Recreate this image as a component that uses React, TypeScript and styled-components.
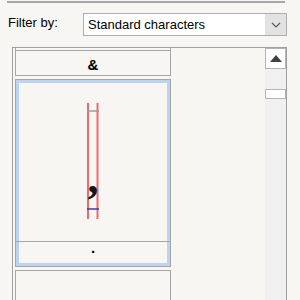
import React from "react";
import styled, { createGlobalStyle } from "styled-components";

const GlobalStyle = createGlobalStyle`
  html, body {
    margin: 0;
    padding: 0;
    background: #f7f6f3;
    overflow: hidden;
  }
  body {
    font-family: "Liberation Sans", Arial, sans-serif;
    font-size: 13px;
    color: #000;
  }
`;

const GREY = "#a6a6a6";
const BLUE = "#bcd3f1";

type Glyph = { char: string; label: string; selected?: boolean; preview?: boolean };

const glyphs: Glyph[] = [
  { char: "&", label: "&" },
  { char: ",", label: ".", selected: true, preview: true },
  { char: "'", label: "" },
];

function App() {
  return (
    <>
      <GlobalStyle />
      <Panel>
        <TopRule />
        <FilterRow>
          <FilterLabel>Filter by:</FilterLabel>
          <Select>
            <SelectText>Standard characters</SelectText>
            <SelectButton>
              <svg width="10" height="6" viewBox="0 0 10 6">
                <polyline points="1,1 5,5 9,1" fill="none" stroke="#5a5a5a" strokeWidth="1.2" />
              </svg>
            </SelectButton>
          </Select>
        </FilterRow>
        <ListBox>
          <CellColumn>
            {glyphs.map((g, i) => (
              <Cell key={i}>
                <ImageArea $selected={!!g.selected}>
                  {g.preview && (
                    <svg width="148" height="158" viewBox="0 0 148 158">
                      <line x1="69" y1="20" x2="69" y2="136" stroke="#f26868" strokeWidth="2" />
                      <line x1="78.5" y1="20" x2="78.5" y2="136" stroke="#f26868" strokeWidth="2" />
                      <line x1="68" y1="28" x2="80" y2="28" stroke="#9c9c9c" strokeWidth="1.5" />
                      <line x1="68" y1="126" x2="80" y2="126" stroke="#3a3aa8" strokeWidth="1.5" />
                      <text
                        x="74"
                        y="110"
                        textAnchor="middle"
                        fontSize="44"
                        fontWeight="bold"
                        fontFamily="Liberation Serif, serif"
                        fill="#151515"
                      >
                        {g.char}
                      </text>
                    </svg>
                  )}
                </ImageArea>
                <Separator />
                <LabelArea $selected={!!g.selected}>{g.label}</LabelArea>
              </Cell>
            ))}
          </CellColumn>
          <ScrollBar>
            <ScrollButton>
              <svg width="12" height="7" viewBox="0 0 12 7">
                <polygon points="0,7 6,0 12,7" fill="#3f3f3f" />
              </svg>
            </ScrollButton>
            <Thumb />
          </ScrollBar>
        </ListBox>
      </Panel>
    </>
  );
}

export default App;

const Panel = styled.div`
  width: 300px;
  height: 300px;
  overflow: hidden;
`;

const TopRule = styled.div`
  margin: 1px 15px 0 7px;
  border-top: 2px solid #a8a8a8;
`;

const FilterRow = styled.div`
  display: flex;
  align-items: flex-start;
  height: 23px;
  margin-top: 10px;
  padding: 0 13px 0 8px;
`;

const FilterLabel = styled.div`
  width: 75px;
  line-height: 15px;
  padding-top: 2px;
`;

const Select = styled.div`
  flex: 1;
  display: flex;
  height: 23px;
  box-sizing: border-box;
  border: 1px solid #adadad;
  background: #ffffff;
`;

const SelectText = styled.div`
  flex: 1;
  line-height: 15px;
  padding: 3px 0 0 4px;
`;

const SelectButton = styled.div`
  width: 21px;
  background: #e2e2e2;
  display: flex;
  align-items: center;
  justify-content: center;
`;

const ListBox = styled.div`
  display: flex;
  height: 270px;
  margin: 11px 13px 0 12px;
  border: 1px solid #a0a0a0;
  overflow: hidden;
`;

const CellColumn = styled.div`
  flex: 1;
  display: flex;
  flex-direction: column;
  gap: 3px;
  padding-left: 2px;
  margin-top: -160px;
`;

const Cell = styled.div`
  width: 156px;
  box-sizing: border-box;
  border: 1px solid ${GREY};
  display: flex;
  flex-direction: column;
`;

const ImageArea = styled.div<{ $selected: boolean }>`
  height: 158px;
  border: 3px solid ${(p) => (p.$selected ? BLUE : "transparent")};
  border-bottom: none;
  svg {
    display: block;
  }
`;

const Separator = styled.div`
  height: 1px;
  background: ${GREY};
`;

const LabelArea = styled.div<{ $selected: boolean }>`
  box-sizing: border-box;
  height: 24px;
  border: 3px solid ${(p) => (p.$selected ? BLUE : "transparent")};
  border-top: none;
  display: flex;
  align-items: center;
  justify-content: center;
  font-size: 15px;
  line-height: 15px;
  font-weight: bold;
  padding-top: ${(p) => (p.$selected ? "0" : "6px")};
  padding-bottom: ${(p) => (p.$selected ? "10px" : "0")};
  overflow: visible;
`;

const ScrollBar = styled.div`
  width: 21px;
  background: #f0f0f0;
  display: flex;
  flex-direction: column;
`;

const ScrollButton = styled.div`
  height: 21px;
  box-sizing: border-box;
  border: 1px solid #b4b4b4;
  background: #ffffff;
  display: flex;
  align-items: center;
  justify-content: center;
`;

const Thumb = styled.div`
  height: 10px;
  margin-top: 20px;
  box-sizing: border-box;
  border: 1px solid #b4b4b4;
  background: #ffffff;
`;
